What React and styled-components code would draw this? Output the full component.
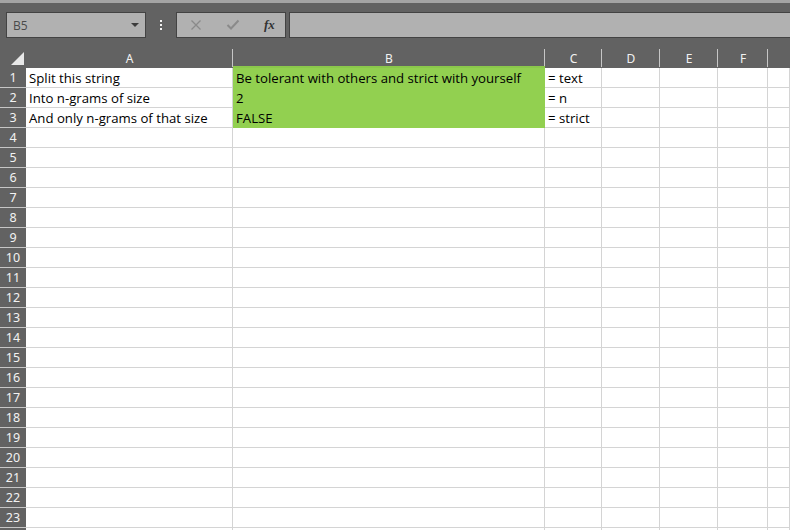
import React from "react";
import styled, { createGlobalStyle } from "styled-components";

const Global = createGlobalStyle`
  html, body {
    margin: 0;
    padding: 0;
    background: #ffffff;
    overflow: hidden;
  }
  * { box-sizing: border-box; }
`;

const Page = styled.div`
  width: 790px;
  height: 530px;
  overflow: hidden;
  background: #ffffff;
  font-family: "Open Sans", "Liberation Sans", sans-serif;
`;

const Toolbar = styled.div`
  height: 47px;
  background: #626262;
  border-top: 3px solid #a4a4a4;
  display: flex;
  align-items: flex-start;
  padding: 9px 0 0 6px;
`;

const NameBox = styled.div`
  width: 140px;
  height: 26px;
  background: #b1b1b1;
  border: 1px solid #434343;
  display: flex;
  align-items: center;
  justify-content: space-between;
  padding: 0 6px 0 6px;
  font-size: 12px;
  color: #4a4a4a;
`;

const Arrow = styled.span`
  width: 0;
  height: 0;
  border-left: 4px solid transparent;
  border-right: 4px solid transparent;
  border-top: 4px solid #3c3c3c;
`;

const Dots = styled.div`
  width: 30px;
  height: 26px;
  display: flex;
  flex-direction: column;
  align-items: center;
  justify-content: center;
  gap: 2px;
  span {
    width: 2px;
    height: 2px;
    background: #f2f2f2;
  }
`;

const FxBox = styled.div`
  width: 110px;
  height: 26px;
  background: #b1b1b1;
  border: 1px solid #434343;
  display: flex;
  align-items: center;
  padding: 0 0 0 13px;
  gap: 24px;
`;

const FxLabel = styled.span`
  font-family: "Liberation Serif", serif;
  font-style: italic;
  font-weight: bold;
  font-size: 13px;
  color: #333;
`;

const FormulaInput = styled.div`
  flex: 1;
  height: 26px;
  margin-left: 3px;
  background: #b1b1b1;
  border: 1px solid #434343;
  border-right: none;
`;

const Grid = styled.div`
  display: grid;
  grid-template-columns: 26px 207px 312px 57px 58px 58px 50px 1fr;
  grid-template-rows: 21px;
  grid-auto-rows: 20px;
`;

const Corner = styled.div`
  background: #626262;
  position: relative;
  &::after {
    content: "";
    position: absolute;
    right: 2px;
    bottom: 3px;
    width: 0;
    height: 0;
    border-left: 13px solid transparent;
    border-bottom: 13px solid #e8e8e8;
  }
`;

const ColHeader = styled.div`
  background: #626262;
  color: #f2f2f2;
  font-family: "Noto Sans", sans-serif;
  font-size: 12px;
  display: flex;
  align-items: center;
  justify-content: center;
  padding-top: 3px;
  position: relative;
  border-bottom: ${({ $selected }) => ($selected ? "2px solid #8bc84b" : "1px solid #626262")};
  &::after {
    content: "";
    position: absolute;
    right: 0;
    top: 2px;
    bottom: 0;
    width: 1px;
    background: ${({ $last }) => ($last ? "transparent" : "#c6c6c6")};
  }
`;

const RowHeader = styled.div`
  background: #626262;
  color: #f2f2f2;
  font-family: "Noto Sans", sans-serif;
  font-size: 12.5px;
  display: flex;
  align-items: center;
  justify-content: center;
  border-bottom: 1px solid #c6c6c6;
`;

const Cell = styled.div`
  background: ${({ $fill }) => $fill || "#ffffff"};
  border-right: 1px solid ${({ $fill }) => $fill || "#d4d4d4"};
  border-bottom: 1px solid ${({ $fill }) => $fill || "#d4d4d4"};
  font-size: 13.2px;
  color: #000;
  display: flex;
  align-items: center;
  padding: 1px 0 0 3px;
  white-space: nowrap;
  overflow: hidden;
`;

const GREEN = "#92d050";
const cols = ["A", "B", "C", "D", "E", "F", ""];
const data = {
  1: ["Split this string", "Be tolerant with others and strict with yourself", "= text"],
  2: ["Into n-grams of size", "2", "= n"],
  3: ["And only n-grams of that size", "FALSE", "= strict"],
};

function XIcon() {
  return (
    <svg width="12" height="12" viewBox="0 0 12 12">
      <path d="M1.5 1.5 L10.5 10.5 M10.5 1.5 L1.5 10.5" stroke="#8a8a8a" strokeWidth="1.3" fill="none" />
    </svg>
  );
}

function CheckIcon() {
  return (
    <svg width="14" height="12" viewBox="0 0 14 12">
      <path d="M1.5 6 L5 9.5 L12.5 1.5" stroke="#8a8a8a" strokeWidth="2" fill="none" />
    </svg>
  );
}

export default function App() {
  const rows = Array.from({ length: 24 }, (_, i) => i + 1);
  return (
    <Page>
      <Global />
      <Toolbar>
        <NameBox>
          B5
          <Arrow />
        </NameBox>
        <Dots>
          <span />
          <span />
          <span />
        </Dots>
        <FxBox>
          <XIcon />
          <CheckIcon />
          <FxLabel>fx</FxLabel>
        </FxBox>
        <FormulaInput />
      </Toolbar>
      <Grid>
        <Corner />
        {cols.map((c, i) => (
          <ColHeader key={i} $selected={c === "B"} $last={i === cols.length - 1}>
            {c}
          </ColHeader>
        ))}
        {rows.map((r) => (
          <React.Fragment key={r}>
            <RowHeader>{r < 24 ? r : ""}</RowHeader>
            {cols.map((c, i) => {
              const vals = data[r] || [];
              return (
                <Cell key={i} $fill={i === 1 && data[r] ? GREEN : null}>
                  {vals[i] || ""}
                </Cell>
              );
            })}
          </React.Fragment>
        ))}
      </Grid>
    </Page>
  );
}
